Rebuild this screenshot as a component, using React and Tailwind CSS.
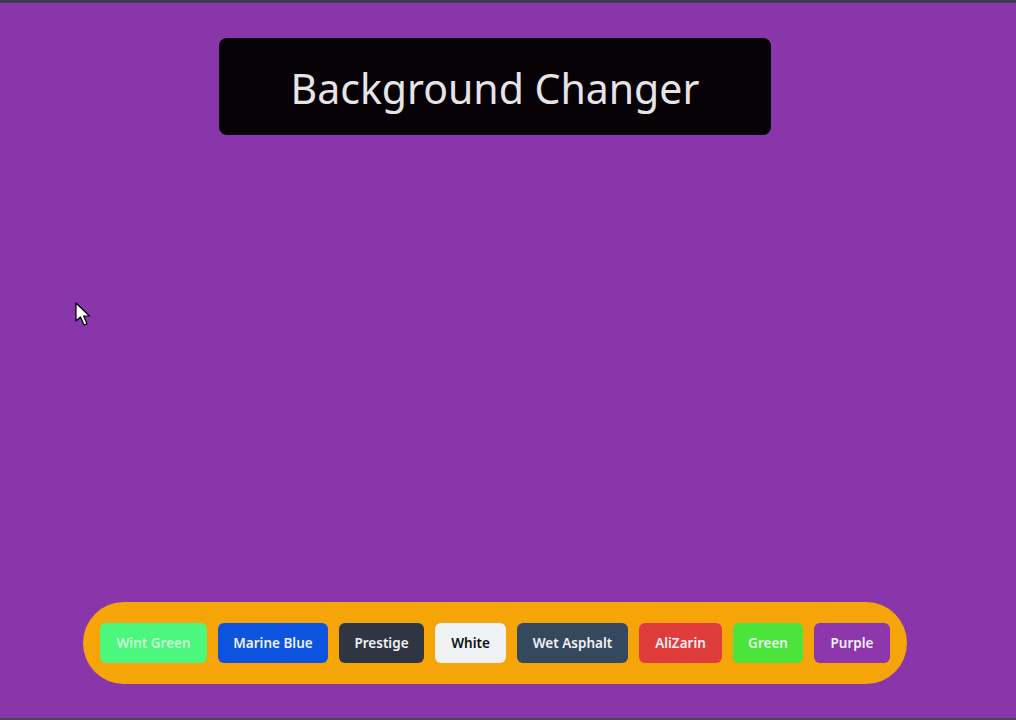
const colors = [
  { name: 'Wint Green', bg: 'bg-[#4bf77c]', text: 'text-[#c9ffd6]', w: 'w-[107px]' },
  { name: 'Marine Blue', bg: 'bg-[#0c53e0]', text: 'text-[#f1f2f6]', w: 'w-[110px]' },
  { name: 'Prestige', bg: 'bg-[#2f3542]', text: 'text-[#f1f2f6]', w: 'w-[85px]' },
  { name: 'White', bg: 'bg-[#f1f2f6]', text: 'text-[#111111]', w: 'w-[71px]' },
  { name: 'Wet Asphalt', bg: 'bg-[#34495e]', text: 'text-[#f1f2f6]', w: 'w-[111px]' },
  { name: 'AliZarin', bg: 'bg-[#e03c3c]', text: 'text-[#f1f2f6]', w: 'w-[83px]' },
  { name: 'Green', bg: 'bg-[#4be43a]', text: 'text-[#e6f6e6]', w: 'w-[70px]' },
  { name: 'Purple', bg: 'bg-[#8e36ab]', text: 'text-[#f1f2f6]', w: 'w-[76px]' },
];

const Cursor = () => (
  <svg className="absolute left-[75px] top-[299px]" width="17" height="25" viewBox="0 0 17 25">
    <path d="M1 1 L1 19 L5.5 15 L9 23 L12 21.7 L8.6 14 L14.5 14 Z" fill="#fff" stroke="#000" strokeWidth="1.2" strokeLinejoin="round" />
  </svg>
);

const App = () => {
  return (
    <div className="relative w-[1016px] h-[720px] overflow-hidden bg-[#8a36ab] border-t-[3px] border-b-[2px] border-t-[#3d3d4f] border-b-[#4a4a55] flex flex-col items-center pr-[26px] font-['Noto_Sans','Open_Sans',sans-serif]">
      <div className="mt-[35px] w-[552px] h-[97px] rounded-lg bg-[#060206] flex items-center justify-center">
        <h1 className="text-[41px] text-[#e6e4e6] leading-none pt-[4px]">Background Changer</h1>
      </div>

      <div className="mt-auto mb-[34px] w-[824px] h-[82px] rounded-full bg-[#f6a509] flex items-center justify-between px-[17px]">
        {colors.map((c) => (
          <button key={c.name} className={`${c.bg} ${c.text} ${c.w} h-[40px] rounded-md text-[13.5px] font-semibold`}>
            {c.name}
          </button>
        ))}
      </div>

      <Cursor />
    </div>
  );
};

export default App;
